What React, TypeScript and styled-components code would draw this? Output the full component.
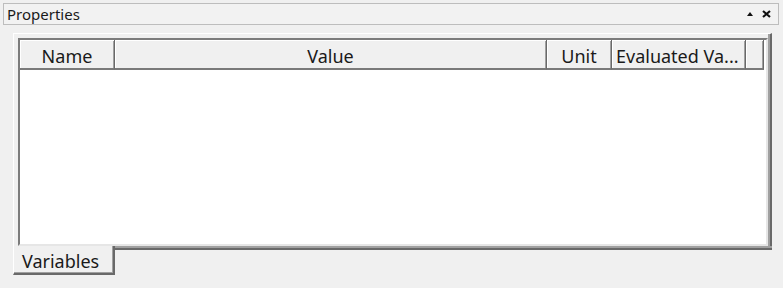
import React from "react";
import styled, { createGlobalStyle } from "styled-components";

const GlobalStyle = createGlobalStyle`
  html, body {
    margin: 0;
    padding: 0;
    background: #f0f0f0;
  }
  body {
    font-family: "Noto Sans", "Open Sans", sans-serif;
    color: #1a1a1a;
  }
`;

const Window = styled.div`
  width: 783px;
  height: 288px;
  box-sizing: border-box;
  padding-top: 3px;
  display: flex;
  flex-direction: column;
`;

const TitleBar = styled.div`
  height: 22px;
  margin: 0 4px 0 3px;
  box-sizing: border-box;
  border: 1px solid #bdbdbd;
  background: #f2f2f2;
  display: flex;
  align-items: center;
  justify-content: space-between;
  padding: 0 7px 0 3px;
  font-size: 15px;
  line-height: 20px;
`;

const TitleButtons = styled.div`
  display: flex;
  align-items: center;
  gap: 9px;
`;

const TabArea = styled.div`
  width: 759px;
  margin: 8px 0 0 13px;
  display: flex;
  flex-direction: column;
`;

const TabPage = styled.div`
  height: 213px;
  box-sizing: border-box;
  border-left: 1px solid #ffffff;
  border-top: 1px solid #ffffff;
  border-right: 2px solid #696969;
  box-shadow: inset -2px 0 #a0a0a0;
  padding: 4px 2px 0 4px;
  display: flex;
`;

const ListView = styled.div`
  flex: 1;
  box-sizing: border-box;
  background: #ffffff;
  border-top: 2px solid #7c7c7c;
  border-left: 2px solid #7c7c7c;
  border-right: 2px solid #e6e6e6;
  border-bottom: 2px solid #e6e6e6;
  overflow: hidden;
`;

const HeaderRow = styled.div`
  display: flex;
  height: 30px;
`;

const HeaderCell = styled.div<{ $width: number; $align?: string }>`
  width: ${({ $width }) => $width}px;
  flex: none;
  box-sizing: border-box;
  background: #f0f0f0;
  border-right: 1px solid #696969;
  border-bottom: 2px solid #7a7a7a;
  box-shadow: inset 1px 1px #ffffff, inset -1px 0 #a0a0a0;
  display: flex;
  align-items: center;
  justify-content: ${({ $align }) => ($align === "left" ? "flex-start" : "center")};
  padding: 3px 4px 0;
  font-size: 18px;
  white-space: nowrap;
  overflow: hidden;
`;

const TabStrip = styled.div`
  display: flex;
`;

const Tab = styled.div`
  width: 102px;
  height: 29px;
  box-sizing: border-box;
  border-left: 1px solid #ffffff;
  border-right: 2px solid #696969;
  border-bottom: 2px solid #696969;
  box-shadow: inset -1px -1px #a0a0a0;
  padding: 3px 0 0 8px;
  font-size: 18px;
  line-height: 24px;
`;

const TabFiller = styled.div`
  flex: 1;
  height: 4px;
  border-top: 2px solid #a0a0a0;
  border-bottom: 2px solid #696969;
  box-sizing: border-box;
`;

const columns = [
  { name: "Name", width: 95 },
  { name: "Value", width: 432 },
  { name: "Unit", width: 65 },
  { name: "Evaluated Va...", width: 134, align: "left" },
  { name: "", width: 18 },
];

const App = () => {
  return (
    <Window>
      <GlobalStyle />
      <TitleBar>
        <span>Properties</span>
        <TitleButtons>
          <svg width="6" height="4" viewBox="0 0 6 4">
            <polygon points="0,4 6,4 3,0" fill="#111" />
          </svg>
          <svg width="9" height="8" viewBox="0 0 9 8">
            <path d="M1 1 L8 7 M8 1 L1 7" stroke="#111" strokeWidth="2.2" />
          </svg>
        </TitleButtons>
      </TitleBar>
      <TabArea>
        <TabPage>
          <ListView>
            <HeaderRow>
              {columns.map((c, i) => (
                <HeaderCell key={i} $width={c.width} $align={c.align}>
                  {c.name}
                </HeaderCell>
              ))}
            </HeaderRow>
          </ListView>
        </TabPage>
        <TabStrip>
          <Tab>Variables</Tab>
          <TabFiller />
        </TabStrip>
      </TabArea>
    </Window>
  );
};

export default App;
